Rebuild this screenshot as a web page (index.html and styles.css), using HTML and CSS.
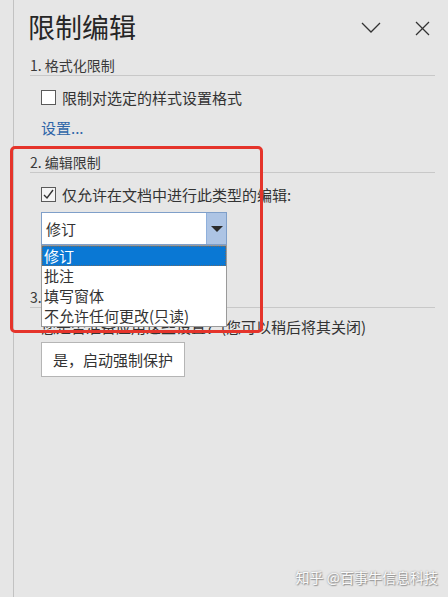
FILE: index.html
```html
<!DOCTYPE html>
<html lang="zh-CN">
  <head>
    <meta charset="UTF-8" />
    <meta name="viewport" content="width=device-width, initial-scale=1.0" />
    <title>限制编辑</title>
    <link rel="stylesheet" href="styles.css">
  </head>
  <body>
    <div class="pane">
      <div class="pane-header">
        <h1>限制编辑</h1>
        <div class="header-icons">
          <svg class="icon" width="20" height="12" viewBox="0 0 20 12">
            <polyline points="1,1 10,10 19,1" fill="none" stroke="#333" stroke-width="1.3" />
          </svg>
          <svg class="icon" width="15" height="15" viewBox="0 0 15 15">
            <line x1="1" y1="1" x2="14" y2="14" stroke="#333" stroke-width="1.3" />
            <line x1="14" y1="1" x2="1" y2="14" stroke="#333" stroke-width="1.3" />
          </svg>
        </div>
      </div>

      <!-- 1. 格式化限制 -->
      <h2 class="section-title first">1. 格式化限制</h2>
      <label class="check-row">
        <span class="checkbox"></span>
        限制对选定的样式设置格式
      </label>
      <a class="link" href="#">设置...</a>

      <!-- 2. 编辑限制 -->
      <h2 class="section-title second">2. 编辑限制</h2>
      <label class="check-row">
        <span class="checkbox checked">
          <svg width="13" height="13" viewBox="0 0 13 13">
            <polyline points="2,7 5,10 11,2" fill="none" stroke="#333" stroke-width="1.4" />
          </svg>
        </span>
        仅允许在文档中进行此类型的编辑:
      </label>
      <div class="combo">
        <div class="combo-value">修订</div>
        <div class="combo-button"><span class="arrow"></span></div>
        <ul class="combo-list">
          <li class="selected">修订</li>
          <li>批注</li>
          <li>填写窗体</li>
          <li>不允许任何更改(只读)</li>
        </ul>
      </div>

      <!-- 3. 启动强制保护 -->
      <h2 class="section-title third">3. 启动强制保护</h2>
      <p class="note">您是否准备应用这些设置？(您可以稍后将其关闭)</p>
      <button class="protect-btn">是，启动强制保护</button>
    </div>

    <div class="highlight-box"></div>
    <div class="watermark">知乎 @百事牛信息科技</div>
  </body>
</html>
```

FILE: styles.css
```css
* {
  margin: 0;
  padding: 0;
  box-sizing: border-box;
}

body {
  font-family: "Noto Sans CJK SC", "Noto Sans", sans-serif;
  background: #e6e6e6;
  color: #333;
  width: 448px;
  height: 597px;
  overflow: hidden;
  position: relative;
}

.pane {
  margin-left: 13px;
  border-left: 1px solid #c2c2c2;
  height: 597px;
  padding: 0 13px 0 16px;
}

/* Header */
.pane-header {
  display: flex;
  justify-content: space-between;
  align-items: center;
  padding-top: 9px;
  height: 45px;
}

h1 {
  font-size: 27px;
  font-weight: 400;
  line-height: 36px;
  color: #262626;
  margin-left: -2px;
  letter-spacing: 0;
}

.header-icons {
  display: flex;
  align-items: center;
  gap: 34px;
  margin-right: 5px;
  margin-top: 2px;
}

.icon {
  display: block;
}

/* Sections */
.section-title {
  font-size: 14px;
  font-weight: 400;
  line-height: 20px;
  color: #3a3a3a;
  border-bottom: 1px solid #c8c8c8;
}

.section-title.first {
  margin-top: 10px;
}

.section-title.second {
  margin-top: 13px;
}

.section-title.third {
  margin-top: 42px;
}

.check-row {
  display: flex;
  align-items: center;
  gap: 6px;
  margin: 10px 0 0 11px;
  height: 22px;
  font-size: 15px;
  color: #333;
}

.checkbox {
  width: 15px;
  height: 15px;
  border: 1px solid #5a5a5a;
  background: #fff;
  display: flex;
  align-items: center;
  justify-content: center;
}

.checkbox.checked {
  background: #f4f4f4;
}

.link {
  display: block;
  margin: 9px 0 0 11px;
  height: 22px;
  line-height: 22px;
  font-size: 15px;
  color: #2e65a8;
  text-decoration: none;
}

/* Combo box */
.combo {
  position: relative;
  display: flex;
  width: 186px;
  height: 33px;
  margin: 7px 0 0 11px;
  border: 1px solid #7f9fc9;
  background: #fff;
}

.combo-value {
  flex: 1;
  padding-left: 4px;
  line-height: 31px;
  font-size: 15px;
  color: #333;
}

.combo-button {
  width: 20px;
  background: #adc4e4;
  border-left: 1px solid #8fb0dc;
  display: flex;
  align-items: center;
  justify-content: center;
}

.arrow {
  width: 0;
  height: 0;
  border-left: 6px solid transparent;
  border-right: 6px solid transparent;
  border-top: 6px solid #2b2b2b;
}

.combo-list {
  position: absolute;
  top: 32px;
  left: -1px;
  width: 186px;
  list-style: none;
  background: #fff;
  border: 1px solid #9a9a9a;
  z-index: 2;
}

.combo-list li {
  height: 20px;
  line-height: 20px;
  padding-left: 2px;
  font-size: 15px;
  color: #333;
}

.combo-list li.selected {
  background: #0a78d4;
  color: #fff;
  outline: 1px dotted #6a6a6a;
  outline-offset: -1px;
}

.note {
  margin: 8px 0 0 11px;
  height: 22px;
  line-height: 22px;
  font-size: 15px;
  color: #333;
  white-space: nowrap;
}

.protect-btn {
  display: block;
  margin: 4px 0 0 11px;
  width: 144px;
  height: 35px;
  background: #fff;
  border: 1px solid #b5b5b5;
  font-family: inherit;
  font-size: 15px;
  color: #333;
}

/* Annotation over the screenshot */
.highlight-box {
  position: absolute;
  left: 10px;
  top: 146px;
  width: 253px;
  height: 187px;
  border: 3px solid #e5342b;
  border-radius: 5px;
  z-index: 3;
}

.watermark {
  position: absolute;
  right: 10px;
  bottom: 10px;
  font-size: 14px;
  color: #fafafa;
  text-shadow: 0 0 2px #8a8a8a, 1px 1px 1px #9a9a9a;
  letter-spacing: 0;
}
```
